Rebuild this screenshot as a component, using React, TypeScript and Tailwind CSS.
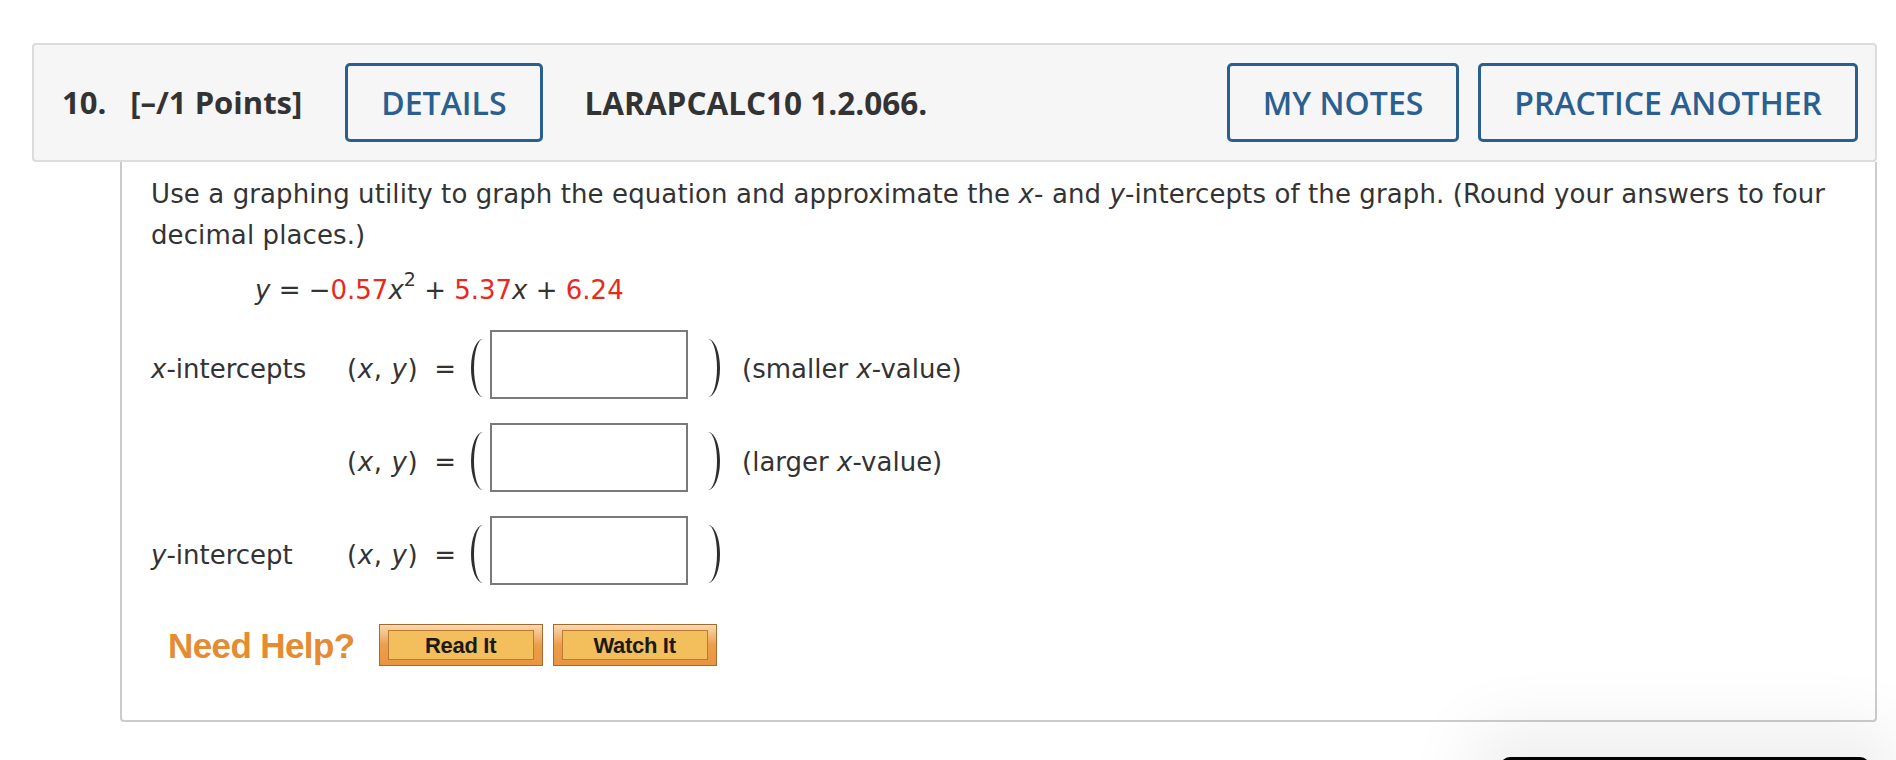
import type { ReactNode } from "react";

function OutlineButton({ children }: { children: ReactNode }) {
  return (
    <button className="h-[79px] px-[33px] border-[3px] border-[#2b5f8f] rounded-[5px] text-[#2b5f8f] text-[32px] font-semibold leading-none">
      {children}
    </button>
  );
}

function Paren({ side }: { side: "left" | "right" }) {
  return (
    <div
      className={
        side === "left"
          ? "mt-[6px] h-[58px] w-[12px] border-l-[3px] border-[#2e2e2e] rounded-[12px_0_0_12px/29px_0_0_29px]"
          : "mt-[6px] h-[58px] w-[12px] border-r-[3px] border-[#2e2e2e] rounded-[0_12px_12px_0/0_29px_29px_0]"
      }
      aria-hidden="true"
    />
  );
}

function AnswerRow({ label, note }: { label?: ReactNode; note?: ReactNode }) {
  return (
    <div className="flex items-center h-[69px]">
      <div className="w-[196px] pt-[10px]">{label}</div>
      <div className="pt-[10px] whitespace-nowrap tracking-[0.6px]">
        (<i>x</i>,&nbsp;<i>y</i>)
      </div>
      <div className="pt-[10px] ml-[16px]">=</div>
      <div className="ml-[15px]">
        <Paren side="left" />
      </div>
      <input
        type="text"
        className="ml-[7px] w-[198px] h-[69px] border-2 border-[#7a7a7a] bg-white outline-none"
      />
      <div className="ml-[20px]">
        <Paren side="right" />
      </div>
      {note && <div className="pt-[10px] ml-[22px]">{note}</div>}
    </div>
  );
}

function HelpButton({ children }: { children: ReactNode }) {
  return (
    <button className="w-[164px] h-[42px] border border-[#a06a30] bg-gradient-to-b from-[#f8d9ae] via-[#ec9e48] to-[#e99541] px-[8px] pt-[5px] pb-[5px]">
      <span className="flex h-full items-center justify-center border border-[#bb7a34] bg-[#f3be5c] text-[22px] font-bold tracking-[-0.3px] text-[#1c1a14] font-['Liberation_Sans',Arial,sans-serif]">
        {children}
      </span>
    </button>
  );
}

export default function App() {
  return (
    <div className="relative h-[760px] w-full overflow-hidden bg-white pt-[43px]">
      {/* Question header */}
      <div className="ml-[32px] mr-[19px] h-[119px] flex items-center border-2 border-[#dcdcdc] rounded-[4px] bg-[#f6f6f6] pl-[28px] pr-[17px] font-['Open_Sans',sans-serif] text-[#333]">
        <span className="text-[31px] font-bold">10.</span>
        <span className="ml-[24px] text-[31px] font-bold">[–/1 Points]</span>
        <div className="ml-[43px]">
          <OutlineButton>DETAILS</OutlineButton>
        </div>
        <span className="ml-[42px] text-[31.5px] font-bold">LARAPCALC10 1.2.066.</span>
        <div className="ml-auto flex gap-[19px]">
          <OutlineButton>MY NOTES</OutlineButton>
          <OutlineButton>PRACTICE ANOTHER</OutlineButton>
        </div>
      </div>

      {/* Question body */}
      <div className="ml-[120px] mr-[19px] border-x-2 border-b-2 border-[#cccccc] rounded-b-[4px] pl-[29px] pr-[28px] pt-[12px] pb-[54px] font-['DejaVu_Sans',Verdana,sans-serif] text-[26px] leading-[41px] text-[#333]">
        <p className="tracking-[0.1px]">
          Use a graphing utility to graph the equation and approximate the <i>x</i>- and{" "}
          <i>y</i>-intercepts of the graph. (Round your answers to four decimal places.)
        </p>

        <div className="mt-[14px] pl-[104px] whitespace-nowrap">
          <i>y</i> = −<span className="text-[#e8291c]">0.57</span>
          <i>x</i>
          <sup className="text-[19px] top-[-0.7em]">2</sup> + <span className="text-[#e8291c]">5.37</span>
          <i>x</i> + <span className="text-[#e8291c]">6.24</span>
        </div>

        <div className="mt-[19px] flex flex-col gap-[24px]">
          <AnswerRow
            label={
              <>
                <i>x</i>-intercepts
              </>
            }
            note={
              <>
                (smaller <i>x</i>-value)
              </>
            }
          />
          <AnswerRow
            note={
              <>
                (larger <i>x</i>-value)
              </>
            }
          />
          <AnswerRow
            label={
              <>
                <i>y</i>-intercept
              </>
            }
          />
        </div>

        {/* Need help */}
        <div className="mt-[39px] flex items-center">
          <span className="ml-[17px] text-[35px] font-bold tracking-[-0.6px] text-[#e58b32] font-['Liberation_Sans',Arial,sans-serif]">
            Need Help?
          </span>
          <div className="ml-[24px] flex gap-[10px]">
            <HelpButton>Read It</HelpButton>
            <HelpButton>Watch It</HelpButton>
          </div>
        </div>
      </div>

      {/* Floating bar cut off at the bottom edge */}
      <div className="absolute left-[1500px] top-[757px] h-[40px] w-[370px] rounded-t-[10px] bg-black shadow-[0_0_70px_30px_rgba(0,0,0,0.07)]" />
    </div>
  );
}
